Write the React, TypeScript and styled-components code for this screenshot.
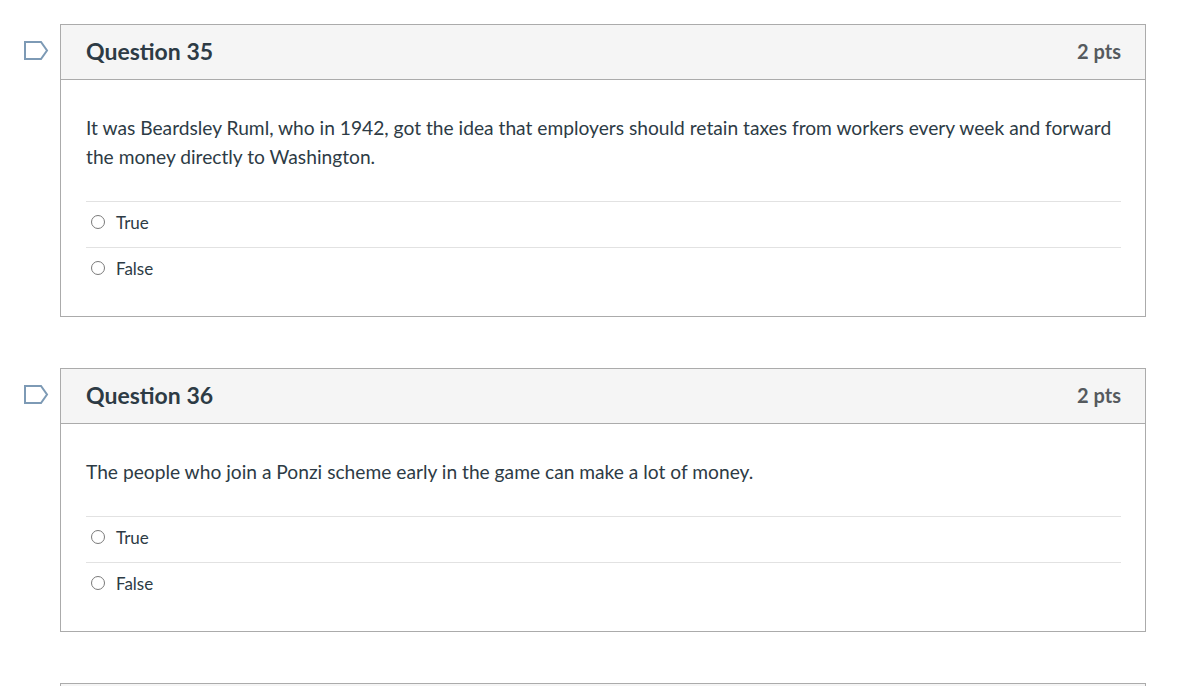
import React from "react";
import styled, { createGlobalStyle } from "styled-components";

const Global = createGlobalStyle`
  html, body { margin: 0; padding: 0; background: #fff; }
  body { font-family: Lato, "Open Sans", sans-serif; color: #2d3b45; }
`;

const Page = styled.div`
  display: flex;
  flex-direction: column;
  gap: 51px;
  padding: 24px 52px 0 0;
  height: 686px;
  box-sizing: border-box;
  overflow: hidden;
`;

const QuestionRow = styled.div`
  display: flex;
  align-items: flex-start;
`;

const FlagCol = styled.div`
  width: 60px;
  flex: none;
  display: flex;
  justify-content: flex-start;
  padding: 17px 0 0 24px;
  box-sizing: border-box;
`;

const Card = styled.div`
  flex: 1;
  border: 1px solid #ababab;
  background: #fff;
`;

const StubCard = styled.div`
  flex: 1;
  height: 40px;
  border: 1px solid #ababab;
  border-bottom: none;
  background: #f5f5f5;
`;

const Header = styled.div`
  height: 52px;
  background: #f5f5f5;
  border-bottom: 1px solid #ababab;
  display: flex;
  align-items: center;
  justify-content: space-between;
  padding: 0 24px 2px 25px;
  box-sizing: content-box;
`;

const Title = styled.h2`
  margin: 0;
  font-size: 23px;
  font-weight: 700;
  color: #2d3b45;
`;

const Points = styled.span`
  font-size: 20px;
  font-weight: 700;
  color: #555a5e;
`;

const Body = styled.div`
  padding: 33px 24px 23px 25px;
`;

const QuestionText = styled.p`
  margin: 0 0 30px;
  font-size: 19.2px;
  line-height: 29px;
  color: #2d3b45;
`;

const Answers = styled.div`
  display: flex;
  flex-direction: column;
`;

const Answer = styled.label`
  height: 46px;
  border-top: 1px solid #e2e2e2;
  display: flex;
  align-items: center;
  gap: 11px;
  padding: 0 0 5px 5px;
  font-size: 17px;
  color: #2d3b45;
  box-sizing: border-box;
`;

const Radio = styled.span`
  width: 14px;
  height: 14px;
  border-radius: 50%;
  border: 1.5px solid #7a7a7a;
  box-sizing: border-box;
  flex: none;
`;

const Flag = () => (
  <svg width="25" height="19" viewBox="0 0 25 19">
    <path d="M1 1 H17 L23 9.5 L17 18 H1 Z" fill="none" stroke="#7d9ab5" strokeWidth="2" strokeLinejoin="miter" />
  </svg>
);

type Q = { n: number; text: string };

const questions: Q[] = [
  {
    n: 35,
    text: "It was Beardsley Ruml, who in 1942, got the idea that employers should retain taxes from workers every week and forward the money directly to Washington.",
  },
  {
    n: 36,
    text: "The people who join a Ponzi scheme early in the game can make a lot of money.",
  },
];

export default function App() {
  return (
    <>
      <Global />
      <Page>
        {questions.map((q) => (
          <QuestionRow key={q.n}>
            <FlagCol>
              <Flag />
            </FlagCol>
            <Card>
              <Header>
                <Title>Question {q.n}</Title>
                <Points>2 pts</Points>
              </Header>
              <Body>
                <QuestionText>{q.text}</QuestionText>
                <Answers>
                  <Answer>
                    <Radio />
                    True
                  </Answer>
                  <Answer>
                    <Radio />
                    False
                  </Answer>
                </Answers>
              </Body>
            </Card>
          </QuestionRow>
        ))}
        <QuestionRow>
          <FlagCol />
          <StubCard />
        </QuestionRow>
      </Page>
    </>
  );
}
